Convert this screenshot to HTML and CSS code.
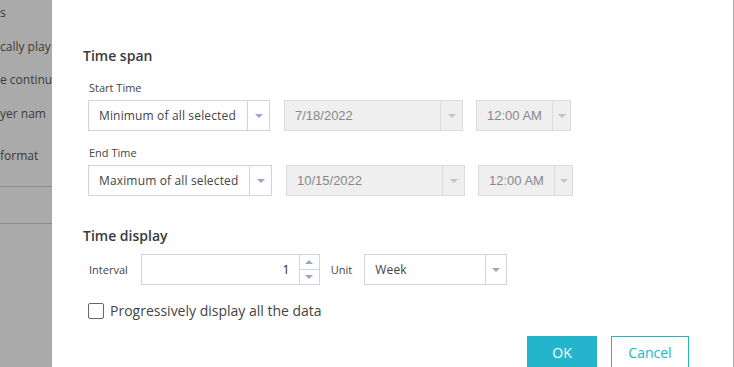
FILE: index.html
```html
<!DOCTYPE html>
<html>
<head>
<meta charset="utf-8">
<link rel="stylesheet" href="styles.css">
</head>
<body>
<div class="page">
  <aside class="side">
    <div class="side-item first">s</div>
    <div class="side-item">cally play</div>
    <div class="side-item">e continu</div>
    <div class="side-item">yer nam</div>
    <div class="side-item">format</div>
    <div class="side-sep"></div>
    <div class="side-sep second"></div>
  </aside>
  <main class="dialog">
    <h2 class="title">Time span</h2>
    <div class="label">Start Time</div>
    <div class="row">
      <div class="select main"><span class="val">Minimum of all selected</span><span class="arrow"><i></i></span></div>
      <div class="select date disabled"><span class="val">7/18/2022</span><span class="arrow"><i></i></span></div>
      <div class="select time disabled"><span class="val">12:00 AM</span><span class="arrow"><i></i></span></div>
    </div>
    <div class="label l2">End Time</div>
    <div class="row r2">
      <div class="select main"><span class="val">Maximum of all selected</span><span class="arrow"><i></i></span></div>
      <div class="select date disabled"><span class="val">10/15/2022</span><span class="arrow"><i></i></span></div>
      <div class="select time disabled"><span class="val">12:00 AM</span><span class="arrow"><i></i></span></div>
    </div>
    <h2 class="title t2">Time display</h2>
    <div class="row disp">
      <span class="inlabel">Interval</span>
      <div class="number"><span class="num">1</span><span class="spin"><span class="up"><i></i></span><span class="down"><i></i></span></span></div>
      <span class="inlabel unit">Unit</span>
      <div class="select unitsel"><span class="val">Week</span><span class="arrow"><i></i></span></div>
    </div>
    <label class="check"><span class="box"></span><span>Progressively display all the data</span></label>
    <div class="buttons">
      <button class="btn ok">OK</button>
      <button class="btn cancel">Cancel</button>
    </div>
  </main>
</div>
</body>
</html>
```
FILE: styles.css
```css
* { box-sizing: border-box; }
html, body { margin: 0; padding: 0; height: 100%; overflow: hidden; }
body { font-family: "Open Sans", "Noto Sans", sans-serif; color: #4c4c4c; background: #fff; }
.page { display: flex; width: 734px; height: 367px; }
.side { width: 52px; flex: none; background: #aaaaaa; color: #3a3a3a; font-size: 12px; overflow: hidden; white-space: nowrap; padding-top: 5px; }
.side-item { height: 33.5px; line-height: 16px; }
.side-item:nth-child(5) { margin-top: 9px; }
.side-sep { border-top: 1px solid #8c8c8c; margin-top: 4px; }
.side-sep.second { margin-top: 36px; }
.dialog { flex: 1; border-right: 1px solid #a6a6a6; padding: 46px 0 0 31px; display: flex; flex-direction: column; align-items: flex-start; }
.title { margin: 0; font-size: 14px; font-weight: 600; color: #3a3a3a; line-height: 20px; }
.t2 { margin-top: 30px; }
.label { font-size: 11px; margin: 15px 0 0 6px; line-height: 14px; color: #444; }
.label.l2 { margin-top: 15px; }
.row { display: flex; align-items: center; margin: 5px 0 0 5px; }
.select { height: 31px; border: 1px solid #d4d4d4; background: #fff; display: flex; align-items: stretch; font-size: 12px; }
.select .val { flex: 1; padding-left: 10px; line-height: 29px; white-space: nowrap; overflow: hidden; color: #444; letter-spacing: 0.15px; }
.select .arrow { width: 22px; border-left: 1px solid #d4d4d4; display: flex; align-items: center; justify-content: center; }
.arrow i, .down i { width: 0; height: 0; border-left: 4px solid transparent; border-right: 4px solid transparent; border-top: 4px solid #93a9c9; }
.up i { width: 0; height: 0; border-left: 4px solid transparent; border-right: 4px solid transparent; border-bottom: 4px solid #93a9c9; }
.main { width: 182px; }
.r2 .main { width: 184px; }
.date { width: 179px; margin-left: 14px; }
.time { width: 95px; margin-left: 13px; }
.disabled { background: #efefef; border-color: #dcdcdc; }
.disabled .val { color: #888; font-family: "Liberation Sans", Arial, sans-serif; font-size: 13px; letter-spacing: 0; }
.disabled .arrow { border-left-color: #dcdcdc; }
.disabled .arrow i { border-top-color: #c4c4c4; }
.time .arrow { width: 18px; }
.disp { margin: 8px 0 0 6px; }
.inlabel { font-size: 11px; color: #444; line-height: 16px; }
.number { width: 179px; height: 31px; margin-left: 13px; border: 1px solid #d4d4d4; display: flex; }
.num { flex: 1; text-align: right; padding-right: 9px; line-height: 29px; font-size: 13px; color: #333; }
.spin { width: 20px; border-left: 1px solid #d4d4d4; display: flex; flex-direction: column; }
.spin span { flex: 1; display: flex; align-items: center; justify-content: center; }
.spin .down { border-top: 1px solid #d4d4d4; }
.unit { margin-left: 11px; }
.unitsel { width: 143px; margin-left: 12px; }
.unitsel .arrow { width: 21px; }
.check { display: flex; align-items: center; margin: 18px 0 0 5px; font-size: 14px; line-height: 16px; color: #444; }
.box { width: 16px; height: 16px; border: 1px solid #666; border-radius: 2px; margin-right: 6px; }
.buttons { display: flex; margin: 17px 0 0 444px; }
.btn { height: 33px; font-family: "Open Sans", "Noto Sans", sans-serif; font-size: 14px; padding: 0; }
.ok { width: 70px; background: #24b5cc; border: 1px solid #24b5cc; color: #fff; }
.cancel { width: 78px; margin-left: 14px; background: #fff; border: 1px solid #24b5cc; color: #24b5cc; }
```
